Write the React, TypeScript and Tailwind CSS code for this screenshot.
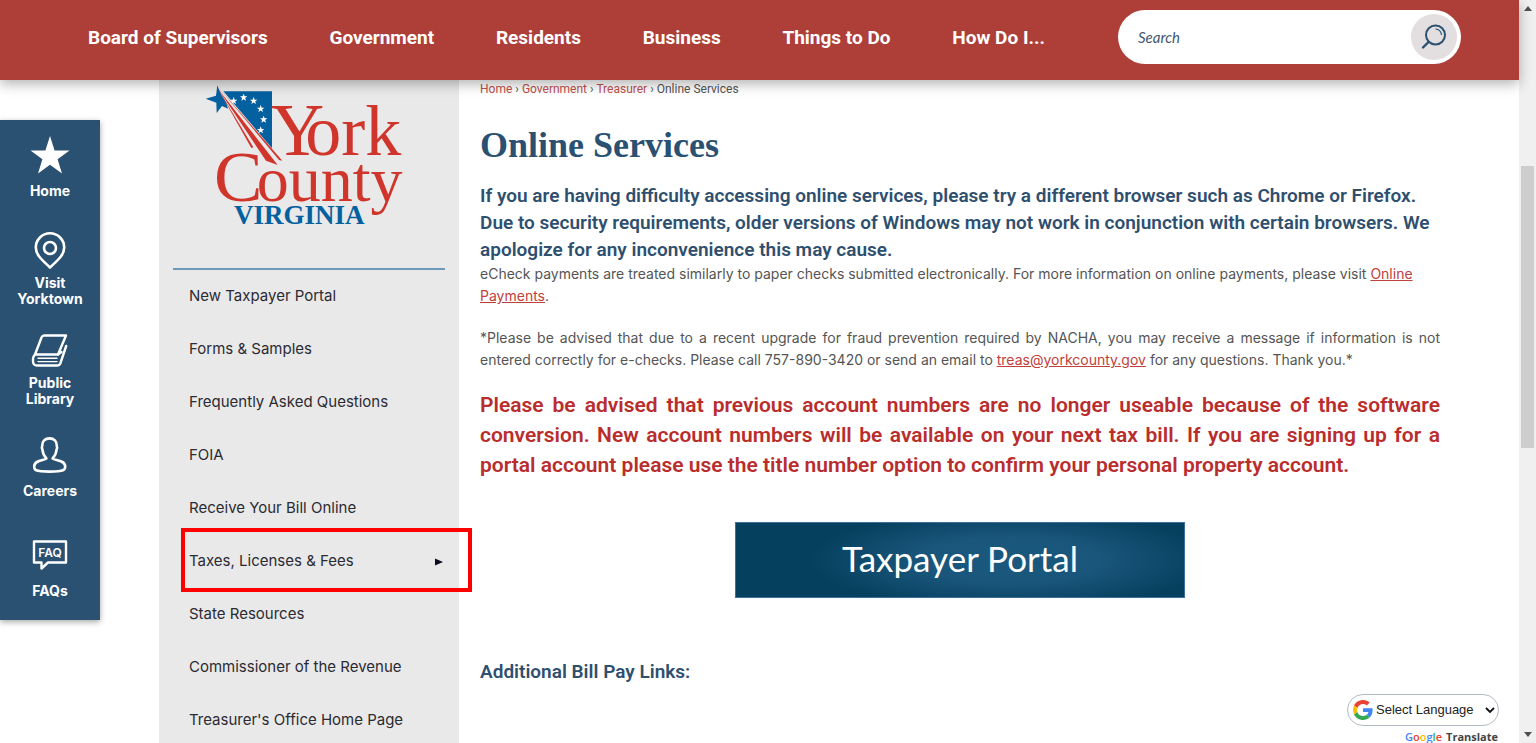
import React from "react";

type SideLink = {
  label: string[];
  icon: React.ReactNode;
};

const navItems = [
  "Board of Supervisors",
  "Government",
  "Residents",
  "Business",
  "Things to Do",
  "How Do I...",
];

const menuItems = [
  { label: "New Taxpayer Portal" },
  { label: "Forms & Samples" },
  { label: "Frequently Asked Questions" },
  { label: "FOIA" },
  { label: "Receive Your Bill Online" },
  { label: "Taxes, Licenses & Fees", hasChildren: true, highlighted: true },
  { label: "State Resources" },
  { label: "Commissioner of the Revenue" },
  { label: "Treasurer's Office Home Page" },
];

const sideLinks: SideLink[] = [
  {
    label: ["Home"],
    icon: (
      <svg viewBox="0 0 40 40" className="size-10" fill="#fff" aria-hidden="true">
        <path d="M20 1 24.6 15.4 39.5 15.4 27.6 24.2 32 38.5 20 29.8 8 38.5 12.4 24.2 0.5 15.4 15.4 15.4Z" />
      </svg>
    ),
  },
  {
    label: ["Visit", "Yorktown"],
    icon: (
      <svg viewBox="0 0 40 40" className="size-10" fill="none" stroke="#fff" strokeWidth={2.6} strokeLinejoin="round" aria-hidden="true">
        <path d="M20 36.500C14 30.500 5.800 24.800 5.800 16.500a14.200 14.200 0 0 1 28.400 0C34.200 24.800 26 30.500 20 36.500Z" />
        <circle cx="20" cy="17" r="6" />
      </svg>
    ),
  },
  {
    label: ["Public", "Library"],
    icon: (
      <svg viewBox="0 0 40 40" className="size-10" fill="none" stroke="#fff" strokeWidth={2.4} strokeLinejoin="round" strokeLinecap="round" aria-hidden="true">
        <path d="M14 4.500H36L28 23.500H5L11.500 6.500Q12.500 4.500 14 4.500Z" />
        <path d="M5 23.500Q2.500 26 3 30.500Q3.300 34.500 7 34.500H27.500Q29.500 34.500 30.300 32.500L36.200 15" />
        <path d="M28 23.500 31.500 21" />
        <path d="M8 27.200H27M8 30.600H27" strokeWidth={1.4} />
      </svg>
    ),
  },
  {
    label: ["Careers"],
    icon: (
      <svg viewBox="0 0 40 40" className="size-10" fill="none" stroke="#fff" strokeWidth={2.6} strokeLinejoin="round" aria-hidden="true">
        <path d="M16.400 23.500C13.600 20.500 12.600 17 12.400 14.500Q11.400 13 12.200 11C12 6 15 3.400 19.500 3.400S27 6 26.800 11Q27.600 13 26.600 14.500C26.400 17 25.400 20.500 22.600 23.500C25 25.500 35.200 24.800 35.200 31.500C35.200 34.800 34.600 36.600 19.500 36.600S4.200 34.800 4.200 31.500C4.200 24.800 14 25.500 16.400 23.500Z" />
      </svg>
    ),
  },
  {
    label: ["FAQs"],
    icon: (
      <svg viewBox="0 0 40 40" className="size-10" aria-hidden="true">
        <path d="M4 6.500H36V27.500H18L11.500 33.500V27.500H4Z" fill="none" stroke="#fff" strokeWidth={2.4} strokeLinejoin="round" />
        <text x="20" y="21.500" textAnchor="middle" fontSize="12" fontWeight={600} fill="#fff">
          FAQ
        </text>
      </svg>
    ),
  },
];

const STAR = "M0-12 3-4 11-4 4.600 1.200 7 9 0 4.400-7 9-4.600 1.200-11-4-3-4Z";

const flagStars = [
  [89, 51],
  [119, 41],
  [149, 51],
  [170, 75],
  [179, 107],
  [170, 139],
];

function CountyLogo() {
  return (
    <svg viewBox="0 0 600 432" className="h-36 w-[200px] overflow-visible" role="img" aria-label="York County Virginia">
      {/* flag field */}
      <path d="M58 22H204V193Z" fill="#0560a0" />
      {flagStars.map(([x, y]) => (
        <path key={`${x}-${y}`} d={STAR} transform={`translate(${x},${y})`} fill="#fff" />
      ))}
      {/* lead star and its trails */}
      <path d="M40 4 52 32 66 54 72 74 54 66 38 87 37 56 5 44 36 35Z" fill="#0560a0" />
      <path d="M40 6 236 232 150 196Z" fill="#e9e9e9" />
      <path d="M42 8 235 230 225 228Z" fill="#d0352c" />
      <path d="M42 14 221 243 186 230Z" fill="#d0352c" />
      <path d="M42 14 148 190 142 192Z" fill="#d0352c" />
      <g fill="#d0352c" fontFamily="Liberation Serif, serif">
        <text x="200" y="214" fontSize="222">Y</text>
        <text x="304" y="214" fontSize="216">ork</text>
        <text x="30" y="350" fontSize="218">C</text>
        <text x="158" y="350" fontSize="192">ounty</text>
      </g>
      <text x="90" y="420" fontSize="81" fontWeight={700} fill="#0560a0" fontFamily="Liberation Serif, serif">
        VIRGINIA
      </text>
    </svg>
  );
}

function Header() {
  return (
    <header className="relative z-10 flex h-20 shrink-0 items-center bg-[#ae3e38] pr-[58px] pb-[6px] pl-[88px] shadow-[0_4px_12px_rgba(0,0,0,0.3)]">
      <nav className="mr-[73px] flex flex-1 justify-between pt-[2px] font-['Roboto',sans-serif] text-[19px] font-bold whitespace-nowrap text-white">
        {navItems.map((item) => (
          <a key={item} href="#">
            {item}
          </a>
        ))}
      </nav>
      <form className="flex h-[54px] w-[343px] items-center rounded-full bg-white pr-1 pl-5">
        <input
          type="search"
          aria-label="Search"
          placeholder="Search"
          className="min-w-0 flex-1 font-['Lato',sans-serif] text-[15px] italic outline-none placeholder:text-[#3f5873]"
        />
        <button type="button" aria-label="Submit search" className="grid size-[46px] place-items-center rounded-full bg-[#e3dedf]">
          <svg viewBox="0 0 26 26" className="size-[26px]" fill="none" stroke="#2a5072" aria-hidden="true">
            <circle cx="14.500" cy="11" r="9.500" strokeWidth="2" />
            <path d="M7.500 18 2 23.500" strokeWidth="2.400" strokeLinecap="round" />
            <path d="M14.500 5Q20 5.500 20.500 11" strokeWidth="1.200" />
          </svg>
        </button>
      </form>
    </header>
  );
}

function QuickLinks() {
  return (
    <nav aria-label="Quick links" className="mt-10 flex w-[100px] shrink-0 flex-col self-start bg-[#2a5072] text-white shadow-[0_2px_6px_rgba(0,0,0,0.35)]">
      {sideLinks.map((link) => (
        <a
          key={link.label[0]}
          href="#"
          className={`flex h-[100px] flex-col items-center text-center text-sm leading-4 font-bold ${
            link.label.length > 1 ? "gap-1 pt-[11px]" : "gap-2 pt-[15px]"
          }`}
        >
          {link.icon}
          <span>
            {link.label.map((line) => (
              <span key={line} className="block">
                {line}
              </span>
            ))}
          </span>
        </a>
      ))}
    </nav>
  );
}

function Sidebar() {
  return (
    <aside className="w-[300px] shrink-0 bg-[#e9e9e9] px-[14px] pt-1">
      <a href="#" className="flex justify-center pr-[10px]">
        <CountyLogo />
      </a>
      <ul className="mt-10 border-t-2 border-[#6c9ab8]">
        {menuItems.map((item) => (
          <li key={item.label} className="relative">
            <a href="#" className="flex h-[53px] items-center justify-between pr-[2px] pl-4 text-[15px] text-[#2b2b33]">
              {item.label}
              {item.hasChildren && (
                <svg viewBox="0 0 8 8" className="size-2" aria-hidden="true">
                  <path d="M0 0.500 8 4 0 7.500Z" fill="#0a0a20" />
                </svg>
              )}
            </a>
            {item.highlighted && (
              <span className="pointer-events-none absolute -top-[7px] -right-[27px] -bottom-1 left-2 border-4 border-[#ff0000]" />
            )}
          </li>
        ))}
      </ul>
    </aside>
  );
}

function Content() {
  return (
    <main className="min-w-0 flex-1 pt-px pr-[79px] pl-[21px]">
      <nav aria-label="Breadcrumb" className="font-['Roboto',sans-serif] text-xs leading-4 text-[#555]">
        <a href="#" className="text-[#c0504c]">Home</a> ›{" "}
        <a href="#" className="text-[#c0504c]">Government</a> ›{" "}
        <a href="#" className="text-[#c0504c]">Treasurer</a> › Online Services
      </nav>
      <h1 className="mt-7 font-['Liberation_Serif',serif] text-[36px] leading-10 font-bold text-[#2a5072]">Online Services</h1>
      <h2 className="mt-[17px] font-['Roboto',sans-serif] text-[19px] leading-[27px] font-semibold text-[#2f4f6f]">
        If you are having difficulty accessing online services, please try a different browser such as Chrome or Firefox. Due to security
        requirements, older versions of Windows may not work in conjunction with certain browsers. We apologize for any inconvenience this
        may cause.
      </h2>
      <p className="text-sm leading-[22px] text-[#555]">
        eCheck payments are treated similarly to paper checks submitted electronically. For more information on online payments, please
        visit{" "}
        <a href="#" className="text-[#c0413c] underline">
          Online Payments
        </a>
        .
      </p>
      <p className="mt-5 text-justify text-sm leading-[22px] text-[#555]">
        *Please be advised that due to a recent upgrade for fraud prevention required by NACHA, you may receive a message if information is
        not entered correctly for e-checks. Please call 757-890-3420 or send an email to{" "}
        <a href="#" className="text-[#c0413c] underline">
          treas@yorkcounty.gov
        </a>{" "}
        for any questions. Thank you.*
      </p>
      <p className="mt-[19px] text-justify font-['Roboto',sans-serif] text-[21px] leading-[30px] font-semibold text-[#b92d2d]">
        Please be advised that previous account numbers are no longer useable because of the software conversion. New account numbers will
        be available on your next tax bill. If you are signing up for a portal account please use the title number option to confirm your
        personal property account.
      </p>
      <a
        href="#"
        className="mx-auto mt-[42px] flex h-[76px] w-[450px] items-center justify-center border border-[#3f7196] bg-[radial-gradient(ellipse_200px_50px_at_61%_50%,#1a587e_0%,#1a567b_45%,#05405f_100%)] pb-1 font-['Lato',sans-serif] text-[35px] text-white"
      >
        Taxpayer Portal
      </a>
      <h2 className="mt-[60px] font-['Roboto',sans-serif] text-[19px] leading-7 font-semibold text-[#2f4f6f]">Additional Bill Pay Links:</h2>
    </main>
  );
}

function TranslateWidget() {
  return (
    <div className="absolute right-[20px] bottom-0 z-10 flex w-[152px] flex-col items-end">
      <label className="flex h-8 w-full items-center rounded-full border border-[#b3bcc6] bg-white pl-[5px]">
        <svg viewBox="0 0 48 48" className="size-5 shrink-0" aria-hidden="true">
          <path fill="#EA4335" d="M24 9.500c3.540 0 6.710 1.220 9.210 3.600l6.850-6.850C35.900 2.380 30.470 0 24 0 14.620 0 6.510 5.380 2.560 13.220l7.980 6.190C12.430 13.720 17.740 9.500 24 9.500z" />
          <path fill="#4285F4" d="M46.980 24.550c0-1.570-.15-3.090-.38-4.550H24v9.020h12.940c-.58 2.960-2.260 5.480-4.780 7.180l7.730 6c4.510-4.180 7.090-10.360 7.090-17.650z" />
          <path fill="#FBBC05" d="M10.530 28.590c-.48-1.450-.76-2.990-.76-4.590s.27-3.140.76-4.590l-7.980-6.190C.92 16.460 0 20.120 0 24s.92 7.540 2.560 10.780l7.970-6.190z" />
          <path fill="#34A853" d="M24 48c6.480 0 11.930-2.130 15.890-5.810l-7.730-6c-2.150 1.450-4.920 2.300-8.160 2.300-6.260 0-11.570-4.220-13.470-9.910l-7.980 6.190C6.510 42.620 14.620 48 24 48z" />
        </svg>
        <select aria-label="Select Language" className="w-[125px] appearance-none pl-[3px] font-['Liberation_Sans',sans-serif] text-[13px] text-[#222]">
          <option>Select Language</option>
        </select>
        <svg viewBox="0 0 10 8" className="-ml-[13px] h-2 w-[10px]" fill="none" stroke="#111" strokeWidth="1.800" aria-hidden="true">
          <path d="M1 2 5 6 9 2" />
        </svg>
      </label>
      <div className="flex h-[17px] items-center gap-1 pt-[3px] pr-px font-['Open_Sans',sans-serif] text-[11px] leading-[13px] font-bold text-[#444]">
        <span className="font-semibold">
          <span className="text-[#4285f4]">G</span>
          <span className="text-[#ea4335]">o</span>
          <span className="text-[#fbbc05]">o</span>
          <span className="text-[#4285f4]">g</span>
          <span className="text-[#34a853]">l</span>
          <span className="text-[#ea4335]">e</span>
        </span>
        Translate
      </div>
    </div>
  );
}

function ScrollTrack() {
  return (
    <div aria-hidden="true" className="flex w-[17px] shrink-0 flex-col items-center bg-[#f0f0f0] py-[6px]">
      <svg viewBox="0 0 8 5" className="h-[5px] w-2">
        <path d="M0 5 4 0 8 5Z" fill="#505050" />
      </svg>
      <div className="mt-[155px] h-[282px] w-[13px] bg-[#cdcdcd]" />
      <svg viewBox="0 0 8 5" className="mt-auto h-[5px] w-2">
        <path d="M0 0 4 5 8 0Z" fill="#505050" />
      </svg>
    </div>
  );
}

export default function App() {
  return (
    <div className="flex h-screen overflow-hidden bg-white font-['Inter',sans-serif]">
      <div className="relative flex min-w-0 flex-1 flex-col">
        <Header />
        <div className="flex min-h-0 flex-1">
          <QuickLinks />
          <div className="ml-[59px] flex min-w-0 flex-1">
            <Sidebar />
            <Content />
          </div>
        </div>
        <TranslateWidget />
      </div>
      <ScrollTrack />
    </div>
  );
}
